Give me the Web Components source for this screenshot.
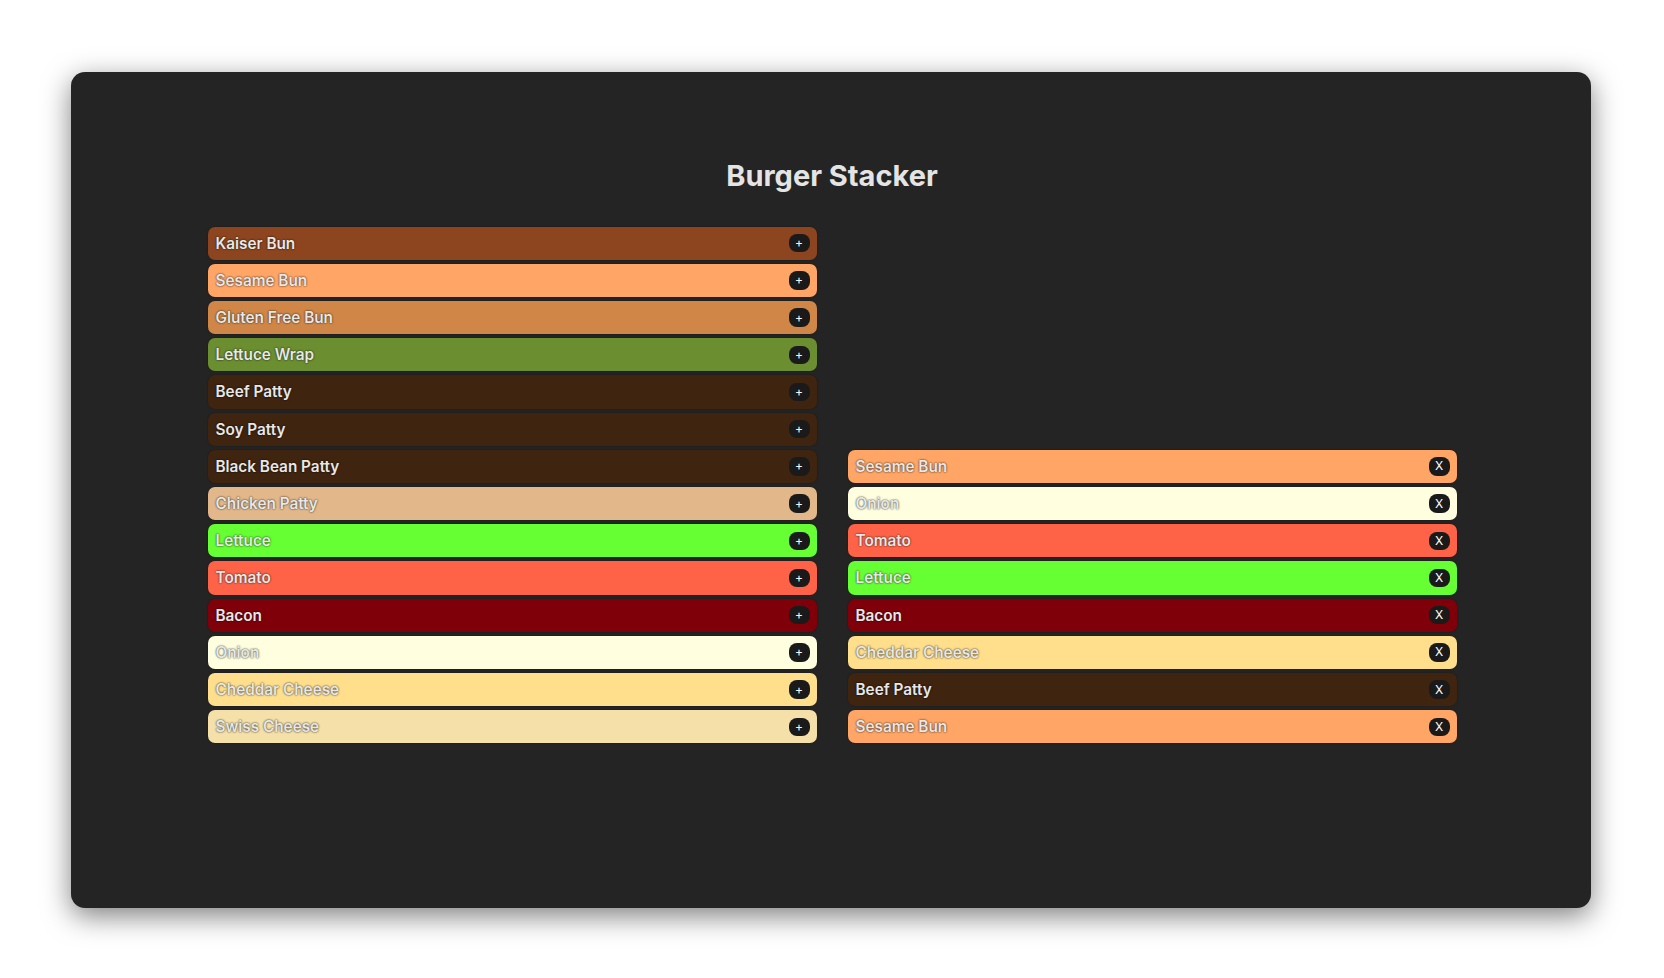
<!DOCTYPE html>
<html lang="en"><head><meta charset="utf-8"><title>Burger Stacker</title>
<style>html,body{margin:0;height:100%;background:#fff}body{font-family:Inter,"Liberation Sans",sans-serif}</style>
</head><body>
<burger-app></burger-app>
<script>
const COL={ 'Kaiser Bun':'#8C451E','Sesame Bun':'#FFA566','Gluten Free Bun':'#CF8646','Lettuce Wrap':'#6B8E30','Beef Patty':'#3F2410','Soy Patty':'#3F2410','Black Bean Patty':'#3F2410','Chicken Patty':'#E2B78A','Lettuce':'#66FF33','Tomato':'#FF6347','Bacon':'#80000A','Onion':'#FFFFE0','Cheddar Cheese':'#FFDE8C','Swiss Cheese':'#F4E0A8'};
class IngredientRow extends HTMLElement{
  constructor(){super();const s=this.attachShadow({mode:'open'});
    s.innerHTML=`<style>
    :host{display:flex;align-items:center;justify-content:space-between;box-sizing:border-box;height:33.2px;padding:0 7px 0 8px;border-radius:7px;background:var(--c);box-shadow:0 0 2px rgba(0,0,0,.35);color:#e8e8e8;font:600 15.3px/1 Inter,"Liberation Sans",sans-serif;text-shadow:0 0 2px rgba(0,0,0,.95)}
    button{all:unset;box-sizing:border-box;width:21px;height:18.4px;border-radius:8px;background:#1a1a1a;color:#fff;display:flex;align-items:center;justify-content:center;font:400 12px/1 Inter,"Liberation Sans",sans-serif;text-shadow:none}
    </style><span><slot></slot></span><button></button>`;}
  connectedCallback(){this.style.setProperty('--c',COL[this.textContent.trim()]);this.shadowRoot.querySelector('button').textContent=this.getAttribute('action')||'+';}
}
class IngredientColumn extends HTMLElement{
  constructor(){super();this.attachShadow({mode:'open'}).innerHTML=`<style>:host{display:flex;flex-direction:column;justify-content:flex-end;gap:4px;flex:0 0 609px}</style><slot></slot>`;}
}
class BurgerApp extends HTMLElement{
  constructor(){super();const s=this.attachShadow({mode:'open'});
    const l=['Kaiser Bun','Sesame Bun','Gluten Free Bun','Lettuce Wrap','Beef Patty','Soy Patty','Black Bean Patty','Chicken Patty','Lettuce','Tomato','Bacon','Onion','Cheddar Cheese','Swiss Cheese'];
    const r=['Sesame Bun','Onion','Tomato','Lettuce','Bacon','Cheddar Cheese','Beef Patty','Sesame Bun'];
    s.innerHTML=`<style>
    :host{display:block;box-sizing:border-box;height:978px;padding:72px 73px 70px 71px;background:#fff}
    .win{box-sizing:border-box;height:100%;background:#242424;border-radius:14px;box-shadow:0 8px 28px rgba(0,0,0,.5);display:flex;flex-direction:column;align-items:center;padding:85px 0 0 2px}
    h1{margin:0 0 31.7px;font:700 29px/38px Inter,"Liberation Sans",sans-serif;color:#e4e4e4}
    .cols{display:flex;gap:31px}
    </style><div class="win"><h1>Burger Stacker</h1><div class="cols">
    <ingredient-column>${l.map(x=>`<ingredient-row>${x}</ingredient-row>`).join('')}</ingredient-column>
    <ingredient-column>${r.map(x=>`<ingredient-row action="X">${x}</ingredient-row>`).join('')}</ingredient-column>
    </div></div>`;}
}
customElements.define('ingredient-row',IngredientRow);
customElements.define('ingredient-column',IngredientColumn);
customElements.define('burger-app',BurgerApp);
</script></body></html>
